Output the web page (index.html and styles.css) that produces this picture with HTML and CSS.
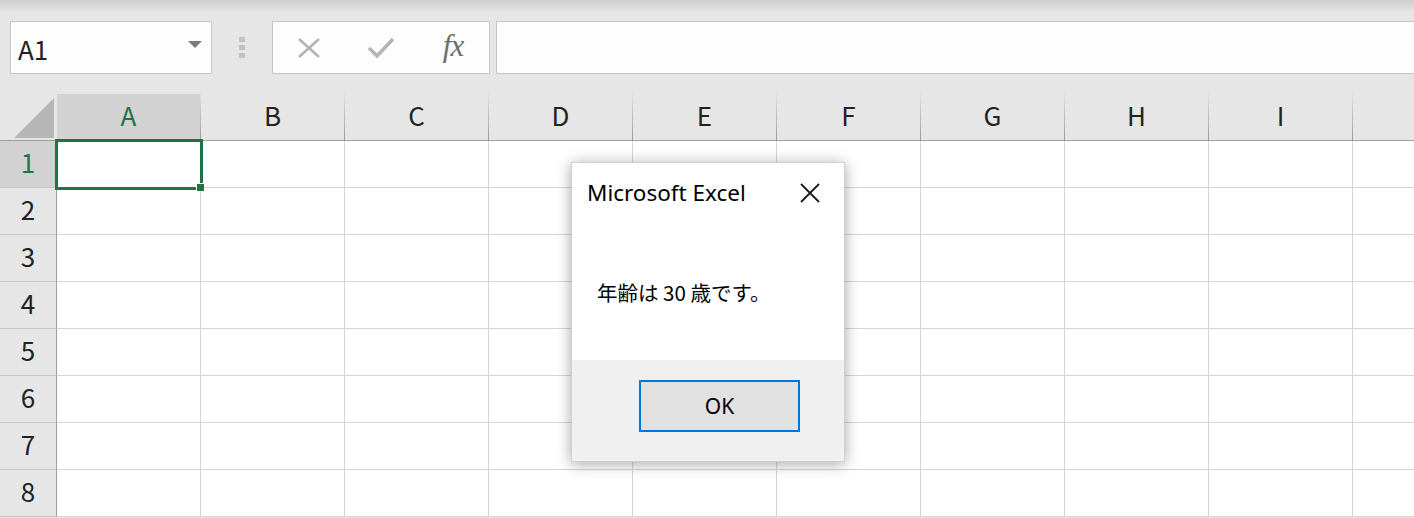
FILE: index.html
```html
<!DOCTYPE html>
<html lang="ja">
<head>
  <meta charset="UTF-8">
  <title>Microsoft Excel</title>
  <link rel="stylesheet" href="styles.css">
</head>
<body>
  <div class="window">
    <div class="toolbar">
      <div class="namebox">
        <span>A1</span>
        <svg class="caret" width="14" height="8" viewBox="0 0 14 8"><polygon points="0,0 14,0 7,7" fill="#7a7a7a"/></svg>
      </div>
      <div class="grip">
        <svg width="6" height="21" viewBox="0 0 6 21">
          <rect x="0" y="0" width="6" height="5" fill="#c2c2c2"/>
          <rect x="0" y="8" width="6" height="5" fill="#c2c2c2"/>
          <rect x="0" y="16" width="6" height="5" fill="#c2c2c2"/>
        </svg>
      </div>
      <div class="fx-buttons">
        <span class="fx-btn">
          <svg width="24" height="20" viewBox="0 0 24 20"><path d="M2 1 L22 19 M22 1 L2 19" stroke="#b4b4b4" stroke-width="2.6" fill="none"/></svg>
        </span>
        <span class="fx-btn">
          <svg width="28" height="22" viewBox="0 0 28 22"><path d="M2 11 L10 19 L26 2" stroke="#b4b4b4" stroke-width="3.6" fill="none"/></svg>
        </span>
        <span class="fx-btn fx">fx</span>
      </div>
      <div class="formula-bar"></div>
    </div>

    <div class="sheet" id="sheet">
      <div class="sheet-row header-row">
        <div class="corner">
          <svg width="40" height="40" viewBox="0 0 40 40"><polygon points="0,40 40,40 40,0" fill="#b6b6b6"/></svg>
        </div>
        <div class="col-h selected">A</div>
        <div class="col-h">B</div>
        <div class="col-h">C</div>
        <div class="col-h">D</div>
        <div class="col-h">E</div>
        <div class="col-h">F</div>
        <div class="col-h">G</div>
        <div class="col-h">H</div>
        <div class="col-h">I</div>
        <div class="col-h"></div>
      </div>
    </div>

    <div class="dialog">
      <div class="dialog-title">
        <span>Microsoft Excel</span>
        <svg class="close" width="20" height="20" viewBox="0 0 20 20"><path d="M1 1 L19 19 M19 1 L1 19" stroke="#1a1a1a" stroke-width="1.8" fill="none"/></svg>
      </div>
      <div class="dialog-body">
        <p>年齢は 30 歳です。</p>
      </div>
      <div class="dialog-footer">
        <button class="ok-btn">OK</button>
      </div>
    </div>
  </div>

  <script>
    // 行を生成
    const sheet = document.getElementById('sheet');
    for (let r = 1; r <= 8; r++) {
      const row = document.createElement('div');
      row.className = 'sheet-row';
      const head = document.createElement('div');
      head.className = 'row-h' + (r === 1 ? ' selected' : '');
      head.textContent = r;
      row.appendChild(head);
      for (let c = 0; c < 10; c++) {
        const cell = document.createElement('div');
        cell.className = 'cell' + (r === 1 && c === 0 ? ' active' : '');
        row.appendChild(cell);
      }
      sheet.appendChild(row);
    }
  </script>
</body>
</html>
```

FILE: styles.css
```css
body {
  margin: 0;
  background-color: #e6e6e6;
  font-family: "Noto Sans CJK JP", "Noto Sans", sans-serif;
  overflow: hidden;
}
.window {
  position: relative;
  width: 1414px;
  height: 518px;
  overflow: hidden;
}
.toolbar {
  display: flex;
  box-sizing: border-box;
  height: 94px;
  padding-top: 21px;
  background: linear-gradient(#cdcdcd, #e6e6e6 12px);
}
.namebox,
.fx-buttons,
.formula-bar {
  box-sizing: border-box;
  height: 53px;
  background-color: #fdfdfd;
  border: 1px solid #c6c6c6;
}
.namebox {
  margin-left: 10px;
  width: 202px;
  display: flex;
  align-items: center;
  justify-content: space-between;
  padding: 0 9px 0 7px;
  font-size: 26px;
  color: #222;
}
.namebox span {
  margin-top: 2px;
}
.caret {
  margin-top: -6px;
}
.grip {
  width: 60px;
  display: flex;
  justify-content: center;
  padding-top: 16px;
  box-sizing: border-box;
}
.fx-buttons {
  width: 218px;
  display: grid;
  grid-template-columns: repeat(3, 72px);
  align-items: center;
  justify-items: center;
}
.fx-btn {
  display: flex;
}
.fx {
  font-family: "Liberation Serif", serif;
  font-style: italic;
  font-size: 31px;
  color: #6d6d6d;
  margin-top: -4px;
  letter-spacing: -1px;
}
.formula-bar {
  flex: 1;
  margin-left: 6px;
  margin-right: -2px;
}

.sheet-row {
  display: grid;
  grid-template-columns: 57px repeat(10, 144px);
  height: 47px;
}
.header-row {
  box-sizing: border-box;
  border-bottom: 1px solid #9e9e9e;
}
.corner {
  display: flex;
  align-items: flex-end;
  justify-content: flex-end;
  padding: 0 3px 2px 0;
}
.col-h {
  box-sizing: border-box;
  border-right: 1px solid #a8a8a8;
  border-image: linear-gradient(#e2e2e2, #9a9a9a) 1;
  display: flex;
  align-items: center;
  justify-content: center;
  padding-bottom: 5px;
  font-size: 26px;
  color: #222;
}
.col-h.selected,
.row-h.selected {
  background-color: #d2d2d2;
  color: #217346;
}
.row-h {
  box-sizing: border-box;
  border-right: 1px solid #9e9e9e;
  border-bottom: 1px solid #c6c6c6;
  display: flex;
  align-items: center;
  justify-content: center;
  padding-bottom: 6px;
  font-size: 26px;
  color: #222;
}
.cell {
  box-sizing: border-box;
  background-color: #fff;
  border-right: 1px solid #d4d4d4;
  border-bottom: 1px solid #d4d4d4;
}
.cell.active {
  position: relative;
}
.cell.active::after {
  content: "";
  position: absolute;
  left: -2px;
  top: -2px;
  right: -3px;
  bottom: -3px;
  border: 3px solid #217346;
  z-index: 1;
}
.cell.active::before {
  content: "";
  position: absolute;
  right: -4px;
  bottom: -4px;
  width: 7px;
  height: 7px;
  background-color: #217346;
  border-left: 1px solid #fff;
  border-top: 1px solid #fff;
  z-index: 2;
}

.dialog {
  position: absolute;
  left: 571px;
  top: 162px;
  width: 274px;
  height: 300px;
  box-sizing: border-box;
  background-color: #fff;
  border: 1px solid #d0d0d0;
  box-shadow: 0 2px 14px rgba(0, 0, 0, 0.35);
  display: flex;
  flex-direction: column;
}
.dialog-title {
  height: 58px;
  display: flex;
  align-items: center;
  justify-content: space-between;
  padding: 0 24px 0 15px;
  font-family: "Noto Sans", sans-serif;
  font-size: 22.5px;
  color: #000;
}
.dialog-title .close {
  margin-top: 2px;
}
.dialog-body {
  height: 139px;
  display: flex;
  align-items: center;
  padding: 3px 0 0 25px;
  box-sizing: border-box;
}
.dialog-body p {
  margin: 0;
  font-size: 20.5px;
  color: #000;
}
.dialog-footer {
  flex: 1;
  background-color: #f0f0f0;
  padding: 20px 0 0 67px;
}
.ok-btn {
  width: 161px;
  height: 52px;
  background-color: #e1e1e1;
  border: 2px solid #0078d7;
  font-family: "Noto Sans", sans-serif;
  font-size: 21px;
  color: #000;
  padding: 0;
}
```
